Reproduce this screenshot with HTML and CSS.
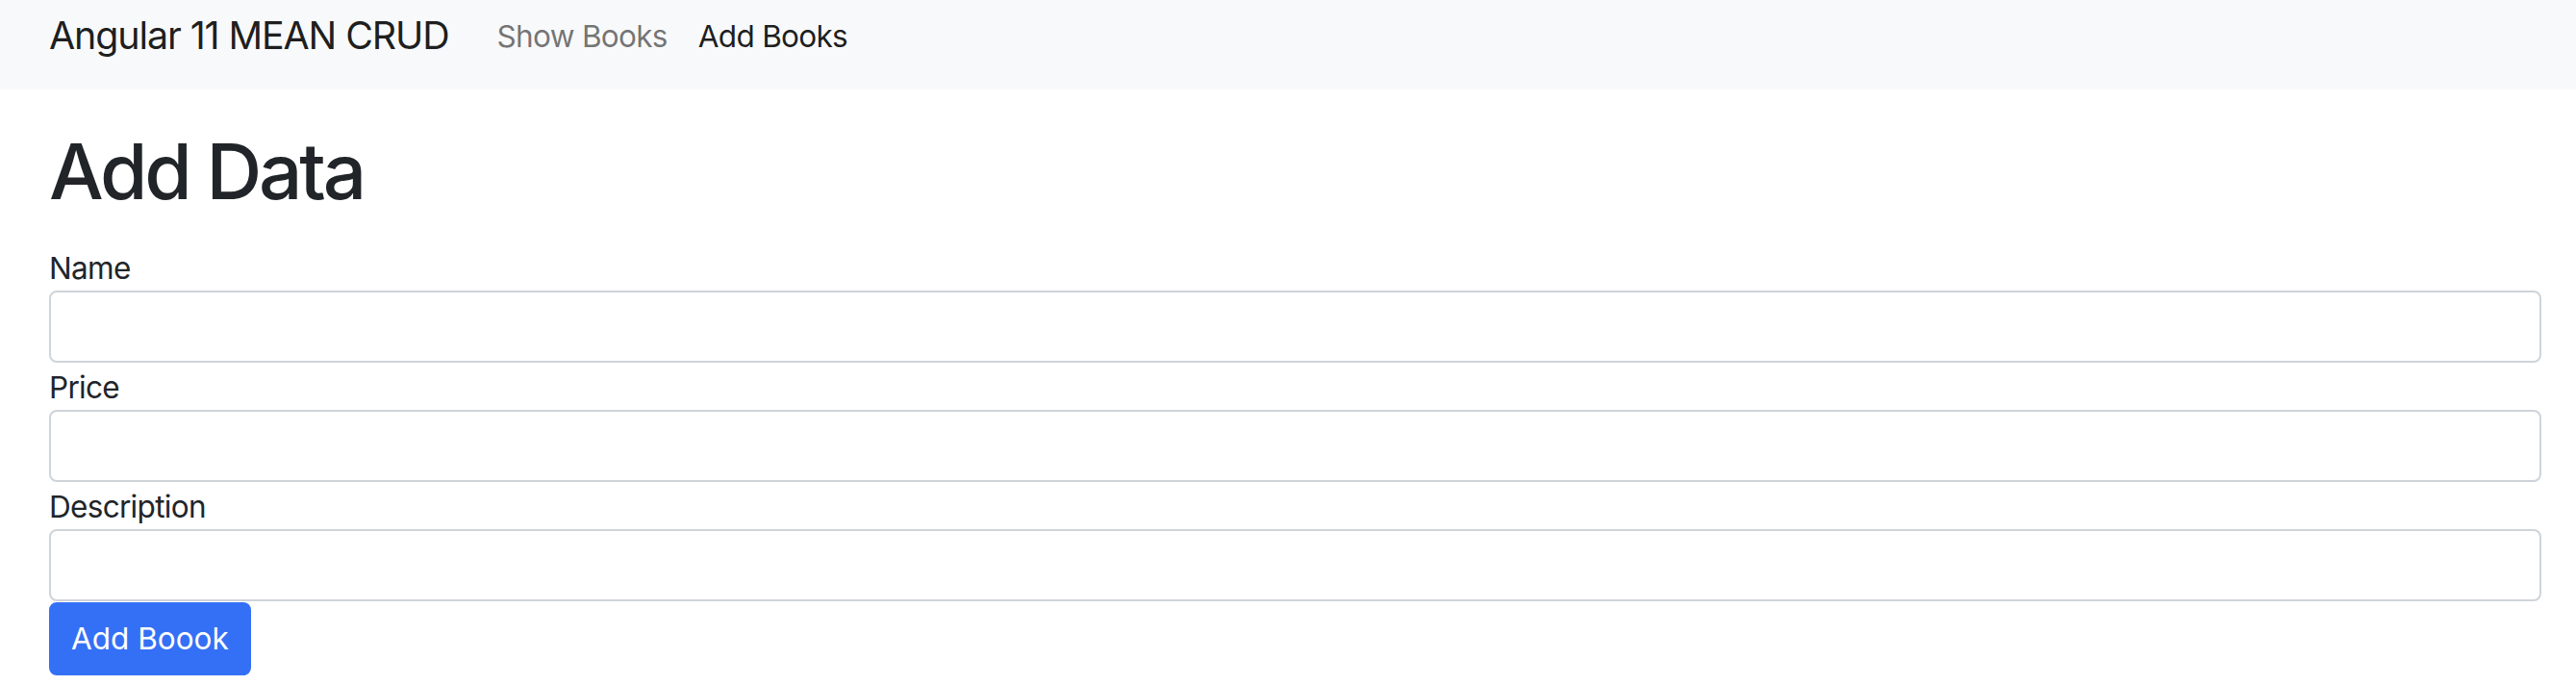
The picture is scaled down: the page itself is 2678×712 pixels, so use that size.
FILE: index.html
```html
<!DOCTYPE html>
<html lang="en">
<head>
<meta charset="utf-8">
<title>Angular 11 MEAN CRUD</title>
<link rel="stylesheet" href="styles.css">
</head>
<body>
<nav class="navbar">
  <a class="brand" href="#">Angular 11 MEAN CRUD</a>
  <ul class="nav">
    <li><a class="nav-link" href="#">Show Books</a></li>
    <li><a class="nav-link active" href="#">Add Books</a></li>
  </ul>
</nav>
<main class="page">
  <h1 class="title">Add Data</h1>
  <form class="form">
    <div class="field">
      <label class="label" for="name">Name</label>
      <input class="control" id="name" type="text">
    </div>
    <div class="field">
      <label class="label" for="price">Price</label>
      <input class="control" id="price" type="text">
    </div>
    <div class="field">
      <label class="label" for="description">Description</label>
      <input class="control" id="description" type="text">
    </div>
    <button class="btn" type="button">Add Boook</button>
  </form>
</main>
</body>
</html>
```
FILE: styles.css
```css
html, body {
  margin: 0;
  padding: 0;
  background: #ffffff;
}
body {
  font-family: Inter, "Noto Sans", "Liberation Sans", sans-serif;
  font-size: 31.5px;
  line-height: 1.5;
  letter-spacing: -0.022em;
  color: #212529;
}
.navbar {
  display: flex;
  align-items: flex-start;
  height: 93px;
  box-sizing: border-box;
  padding: 8px 36px 0 51px;
  background: #f8f9fa;
}
.brand {
  font-size: 39.4px;
  line-height: 59px;
  letter-spacing: -0.028em;
  color: rgba(0, 0, 0, 0.9);
  text-decoration: none;
  margin-right: 34px;
}
.nav {
  display: flex;
  list-style: none;
  margin: 0;
  padding: 0;
}
.nav-link {
  display: block;
  padding: 0 16px;
  line-height: 59px;
  color: rgba(0, 0, 0, 0.55);
  text-decoration: none;
}
.nav-link.active {
  color: rgba(0, 0, 0, 0.9);
}
.page {
  padding: 0 36px 0 51px;
}
.title {
  margin: 37px 0 27px;
  font-size: 80px;
  font-weight: 500;
  line-height: 1.2;
  letter-spacing: -0.04em;
}
.form {
  margin: 0;
}
.field {
  display: flex;
  flex-direction: column;
}
.label {
  display: block;
  height: 49px;
  line-height: 47px;
  padding-top: 2px;
  box-sizing: border-box;
}
.control {
  display: block;
  width: 100%;
  height: 75px;
  box-sizing: border-box;
  margin: 0;
  padding: 12px 24px;
  font: inherit;
  color: #212529;
  background: #ffffff;
  border: 2px solid #ced4da;
  border-radius: 8px;
  outline: none;
}
.btn {
  display: block;
  margin-top: 1px;
  height: 76px;
  padding: 0 21px;
  font: inherit;
  color: #ffffff;
  background: #3470f5;
  border: 2px solid #3470f5;
  border-radius: 8px;
}
```
